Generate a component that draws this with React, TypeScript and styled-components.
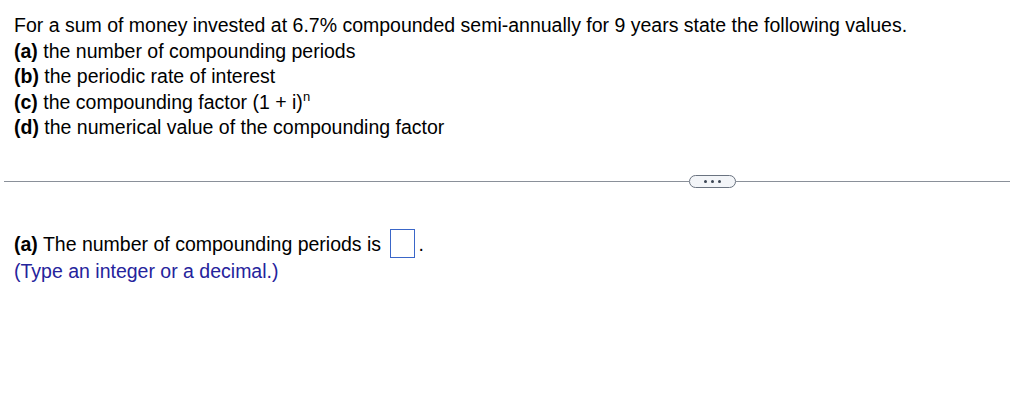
import React from 'react';
import styled, { createGlobalStyle } from 'styled-components';

const GlobalStyle = createGlobalStyle`
  body {
    margin: 0;
    background: #ffffff;
    font-family: "Liberation Sans", Arial, sans-serif;
    color: #000000;
  }
`;

const Page = styled.div`
  width: 1013px;
  height: 408px;
  background: #ffffff;
`;

const Question = styled.div`
  padding: 13px 14px 0 14px;
  font-size: 19.5px;
  line-height: 25.6px;
`;

const Line = styled.div`
  white-space: nowrap;
`;

const Part = styled.b`
  font-weight: bold;
`;

const Sup = styled.sup`
  font-size: 13px;
  line-height: 0;
  vertical-align: 8px;
`;

const Divider = styled.div`
  display: flex;
  align-items: center;
  margin: 34px 3px 0 4px;
  height: 14px;
`;

const Rule = styled.div<{ $width?: number }>`
  flex: ${(p) => (p.$width ? `0 0 ${p.$width}px` : '1')};
  height: 1px;
  background: #8a9099;
`;

const MoreButton = styled.div`
  width: 45px;
  height: 11px;
  border: 1px solid #6a7380;
  border-radius: 7px;
  background: #f3f5f8;
  display: flex;
  align-items: center;
  justify-content: center;
  gap: 4px;
`;

const Dot = styled.span`
  width: 3px;
  height: 3px;
  border-radius: 50%;
  background: #3c4654;
`;

const Answer = styled.div`
  padding: 40px 14px 0 14px;
  font-size: 19.5px;
  line-height: 28px;
`;

const AnswerLine = styled.div`
  display: flex;
  align-items: center;
  height: 30px;
  white-space: pre;
`;

const InputBox = styled.span`
  display: inline-block;
  width: 23px;
  height: 27px;
  border: 1.5px solid #3a66c8;
  margin: 0 4px 0 3px;
  box-sizing: content-box;
`;

const Hint = styled.div`
  color: #25239c;
  margin-top: -2px;
`;

export default function App() {
  return (
    <Page>
      <GlobalStyle />
      <Question>
        <Line>
          For a sum of money invested at 6.7% compounded semi-annually for 9 years state the following values.
        </Line>
        <Line>
          <Part>(a)</Part> the number of compounding periods
        </Line>
        <Line>
          <Part>(b)</Part> the periodic rate of interest
        </Line>
        <Line>
          <Part>(c)</Part> the compounding factor (1 + i)<Sup>n</Sup>
        </Line>
        <Line>
          <Part>(d)</Part> the numerical value of the compounding factor
        </Line>
      </Question>
      <Divider>
        <Rule $width={685} />
        <MoreButton>
          <Dot />
          <Dot />
          <Dot />
        </MoreButton>
        <Rule />
      </Divider>
      <Answer>
        <AnswerLine>
          <Part>(a)</Part> The number of compounding periods is <InputBox />.
        </AnswerLine>
        <Hint>(Type an integer or a decimal.)</Hint>
      </Answer>
    </Page>
  );
}
